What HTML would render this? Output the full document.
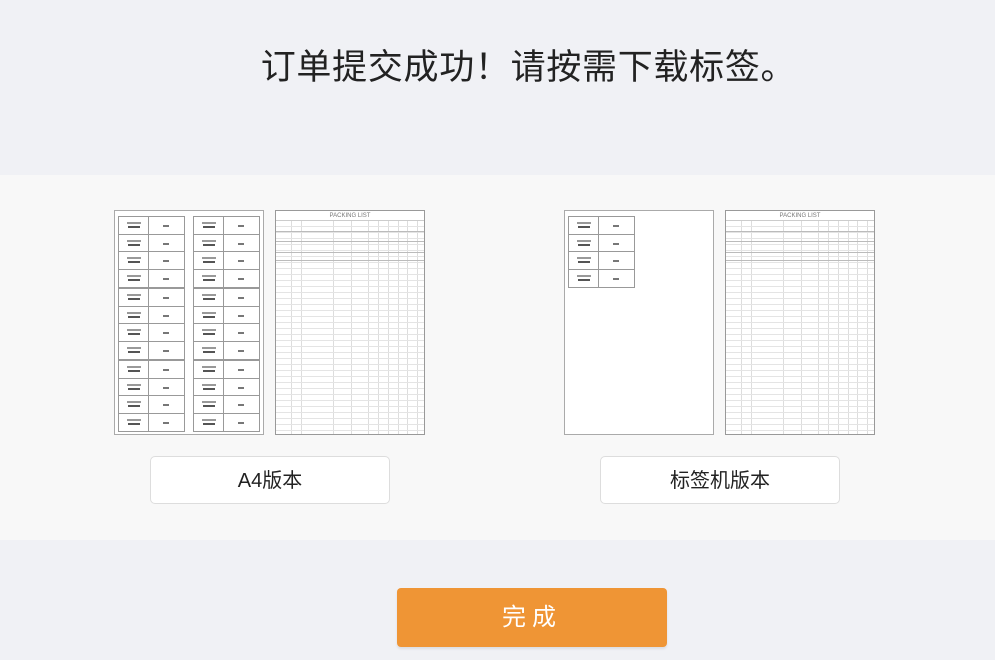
<!DOCTYPE html>
<html><head><meta charset="utf-8">
<style>
*{margin:0;padding:0;box-sizing:border-box}
body{width:995px;height:660px;background:#f0f1f5;font-family:"Liberation Sans","Noto Sans CJK SC",sans-serif;position:relative;overflow:hidden}
.title{position:absolute;left:0;width:1057px;top:39px;text-align:center;font-size:35px;color:#222;letter-spacing:0.7px}
.band{position:absolute;left:0;top:175px;width:995px;height:365px;background:#f8f8f8}
.page{position:absolute;width:150px;height:225px;background:#fff;border:1px solid #aaa}
.lab{position:absolute;width:67px;height:72px;border:1px solid #999;background:#fff}
.lab .r{height:17.5px;border-bottom:1px solid #999;position:relative}
.lab .r:last-child{border-bottom:none}
.lab .r::before{content:"";position:absolute;left:29px;top:0;bottom:0;border-left:1px solid #999}
.lab .r i{position:absolute;left:8px;top:5px;width:14px;height:2px;background:#999}
.lab .r b{position:absolute;left:9px;top:9px;width:12px;height:2px;background:#555}
.lab .r u{position:absolute;left:44px;top:8px;width:6px;height:2px;background:#777}
.pl{position:absolute;width:150px;height:225px;background:#fff;border:1px solid #999;overflow:hidden}
.pl .t{position:absolute;left:0;right:0;top:0;height:10px;text-align:center;font-size:6px;color:#777;line-height:10px;border-bottom:1px solid #ccc}
.pl .g{position:absolute;left:0;right:0;top:10px;bottom:0;
background:repeating-linear-gradient(to bottom,transparent 0 5px,#e4e4e4 5px 6px),
linear-gradient(to right,transparent 15px,#ddd 15px 16px,transparent 16px 25px,#ddd 25px 26px,transparent 26px 57px,#ddd 57px 58px,transparent 58px 75px,#ddd 75px 76px,transparent 76px 92px,#ddd 92px 93px,transparent 93px 102px,#ddd 102px 103px,transparent 103px 112px,#ddd 112px 113px,transparent 113px 122px,#ddd 122px 123px,transparent 123px 131px,#ddd 131px 132px,transparent 132px 141px,#ddd 141px 142px,transparent 142px)}
.pl .h{position:absolute;left:0;right:0;height:1px;background:#bbb}
.btn{position:absolute;width:240px;height:48px;background:#fff;border:1px solid #ddd;border-radius:5px;text-align:center;line-height:48px;font-size:20px;color:#222}
.done{position:absolute;left:397px;top:588px;width:270px;height:59px;background:#ef9535;border-radius:4px;color:#fff;font-size:24px;text-align:center;line-height:60px;letter-spacing:6px;box-shadow:0 2px 2px #dcdde2}
</style></head><body>
<div class="title">订单提交成功！请按需下载标签。</div>
<div class="band"></div>

<div class="page" style="left:114px;top:210px"></div>
<div class="lab" style="left:118px;top:216px"><div class="r"><i></i><b></b><u></u></div><div class="r"><i></i><b></b><u></u></div><div class="r"><i></i><b></b><u></u></div><div class="r"><i></i><b></b><u></u></div></div>
<div class="lab" style="left:193px;top:216px"><div class="r"><i></i><b></b><u></u></div><div class="r"><i></i><b></b><u></u></div><div class="r"><i></i><b></b><u></u></div><div class="r"><i></i><b></b><u></u></div></div>
<div class="lab" style="left:118px;top:288px"><div class="r"><i></i><b></b><u></u></div><div class="r"><i></i><b></b><u></u></div><div class="r"><i></i><b></b><u></u></div><div class="r"><i></i><b></b><u></u></div></div>
<div class="lab" style="left:193px;top:288px"><div class="r"><i></i><b></b><u></u></div><div class="r"><i></i><b></b><u></u></div><div class="r"><i></i><b></b><u></u></div><div class="r"><i></i><b></b><u></u></div></div>
<div class="lab" style="left:118px;top:360px"><div class="r"><i></i><b></b><u></u></div><div class="r"><i></i><b></b><u></u></div><div class="r"><i></i><b></b><u></u></div><div class="r"><i></i><b></b><u></u></div></div>
<div class="lab" style="left:193px;top:360px"><div class="r"><i></i><b></b><u></u></div><div class="r"><i></i><b></b><u></u></div><div class="r"><i></i><b></b><u></u></div><div class="r"><i></i><b></b><u></u></div></div>

<div class="pl" style="left:275px;top:210px"><div class="t">PACKING LIST</div><div class="g"></div><div class="h" style="top:20px"></div><div class="h" style="top:30px"></div><div class="h" style="top:41px"></div><div class="h" style="top:49px"></div><div class="h" style="top:224px"></div></div>

<div class="page" style="left:564px;top:210px"></div>
<div class="lab" style="left:568px;top:216px"><div class="r"><i></i><b></b><u></u></div><div class="r"><i></i><b></b><u></u></div><div class="r"><i></i><b></b><u></u></div><div class="r"><i></i><b></b><u></u></div></div>

<div class="pl" style="left:725px;top:210px"><div class="t">PACKING LIST</div><div class="g"></div><div class="h" style="top:20px"></div><div class="h" style="top:30px"></div><div class="h" style="top:41px"></div><div class="h" style="top:49px"></div><div class="h" style="top:224px"></div></div>

<div class="btn" style="left:150px;top:456px">A4版本</div>
<div class="btn" style="left:600px;top:456px">标签机版本</div>
<div class="done">完成</div>
</body></html>
